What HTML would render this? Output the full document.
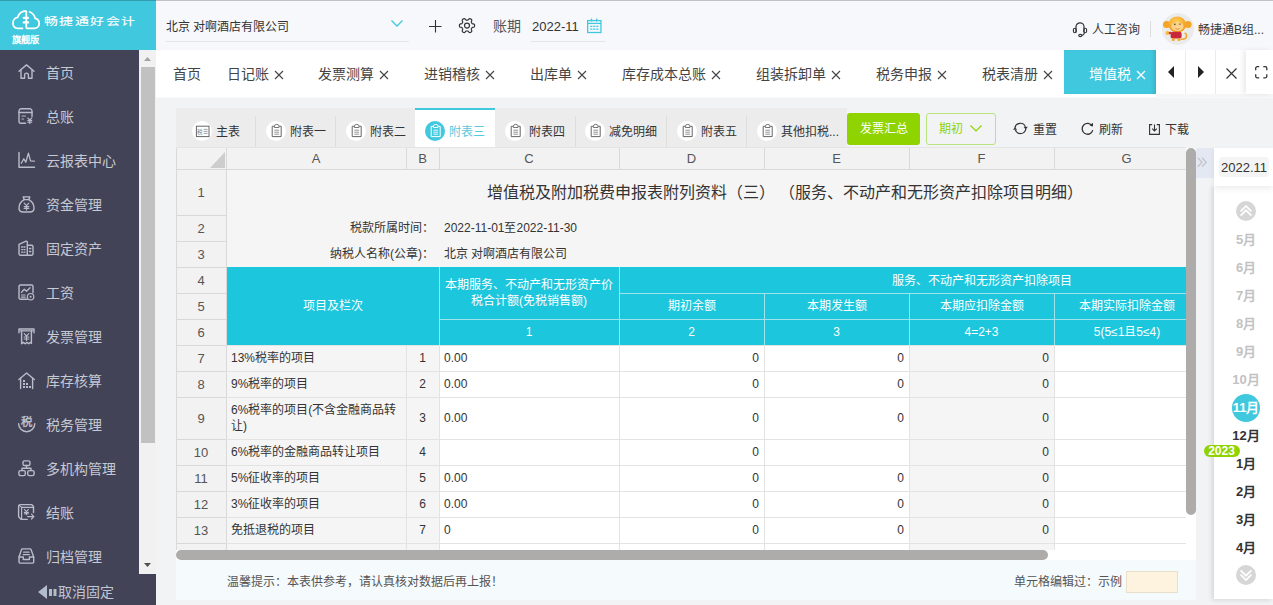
<!DOCTYPE html><html lang="zh-CN"><head><meta charset="utf-8"><style>
*{box-sizing:border-box;margin:0;padding:0}
html,body{width:1273px;height:605px;overflow:hidden;background:#f2f3f5;font-family:"Liberation Sans",sans-serif;font-size:12px;color:#333;position:relative}
.a{position:absolute}
.t{position:absolute;white-space:nowrap;line-height:14px}
svg{position:absolute;overflow:visible}
</style></head><body><div class="a" style="left:0px;top:0px;width:156px;height:50px;background:#40c8de;"></div>
<div class="a" style="left:0px;top:50px;width:156px;height:555px;background:#434357;"></div>
<div class="a" style="left:156px;top:0px;width:1117px;height:50px;background:#f7f8fc;"></div>
<div class="a" style="left:156px;top:50px;width:1117px;height:47px;background:#ffffff;"></div>
<div class="a" style="left:156px;top:97px;width:1117px;height:1px;background:#f7f8f9;"></div>
<div class="a" style="left:1156px;top:94px;width:117px;height:3px;background:#f6f6f7;"></div>
<div class="a" style="left:0px;top:0px;width:1273px;height:1px;background:rgba(0,0,0,.22);z-index:9"></div>
<svg style="left:12px;top:10px;" width="29" height="20" viewBox="0 0 29 20"><g fill="none" stroke="#fff" stroke-width="1.8" stroke-linecap="butt"><path d="M11.2 18.3 H5.6 C2.6 18.3 1 16 1 13.2 C1 10.2 3 7.6 5.6 7.3 C6.9 3.6 10.2 1 14.3 0.9"/><path d="M17 1.5 C20 2.6 22.3 5.2 23.2 8.3 C25.7 9 27.2 11 27.2 13.4 C27.2 16.3 25 18.3 22.2 18.3 H14.3"/><path d="M14.3 0.9 V18.3"/></g><rect x="10.6" y="6.7" width="6.5" height="2.3" rx="1.15" fill="#fff"/><rect x="10.6" y="11.2" width="6.5" height="2.4" rx="1.2" fill="#fff"/></svg>
<div class="t" style="left:44px;top:12.5px;font-size:14px;line-height:16px;color:#fff;letter-spacing:1.4px;font-weight:normal;transform:scaleY(.76);transform-origin:0 50%;-webkit-text-stroke:0.15px #fff">畅捷通好会计</div>
<div class="t" style="left:12px;top:34px;font-size:9.3px;line-height:12px;color:#fff;font-weight:bold">旗舰版</div>
<div class="a" style="left:139px;top:50px;width:17px;height:524px;background:#f1f1f1;"></div>
<div class="a" style="left:141px;top:67px;width:14px;height:376px;background:#c1c1c1;"></div>
<svg style="left:144px;top:57px;" width="7" height="4" viewBox="0 0 7 4"><path d="M0 4 L3.5 0 L7 4Z" fill="#a3a3a3"/></svg>
<svg style="left:144px;top:563px;" width="7" height="4" viewBox="0 0 7 4"><path d="M0 0 L3.5 4 L7 0Z" fill="#505050"/></svg>
<div class="t" style="left:46px;top:64.0px;font-size:14px;line-height:18px;color:#c6c9d4;">首页</div>
<svg style="left:18px;top:64px;" width="17" height="17" viewBox="0 0 17 17"><g fill="none" stroke="#b9bdc9" stroke-width="1.4" stroke-linejoin="round" stroke-linecap="round"><path d="M1 7.2 L8.5 0.9 L16 7.2"/><path d="M3 5.6 V14.3 H6.6 V11 A1.9 1.9 0 0 1 10.4 11 V14.3 H14 V5.6"/></g></svg>
<div class="t" style="left:46px;top:108.0px;font-size:14px;line-height:18px;color:#c6c9d4;">总账</div>
<svg style="left:18px;top:108px;" width="17" height="17" viewBox="0 0 17 17"><g fill="none" stroke="#b9bdc9" stroke-width="1.4" stroke-linejoin="round" stroke-linecap="round"><path d="M7.5 15.3 H2.5 A1.5 1.5 0 0 1 1 13.8 V3 A2.3 2.3 0 0 1 3.3 0.7 H11.7 A2.3 2.3 0 0 1 14 3 V8.5"/><path d="M1 4.5 H14"/><path d="M4 8 H7.5 M4 11 H5.5" stroke-width="1.2"/><path d="M9.8 10 L11.8 12 L13.8 10 M11.8 12 V15.8 M9.8 12.6 H13.8 M9.8 14.2 H13.8" stroke-width="1.1"/></g></svg>
<div class="t" style="left:46px;top:152.0px;font-size:14px;line-height:18px;color:#c6c9d4;">云报表中心</div>
<svg style="left:18px;top:152px;" width="17" height="17" viewBox="0 0 17 17"><g fill="none" stroke="#b9bdc9" stroke-width="1.4" stroke-linejoin="round" stroke-linecap="round"><path d="M1 0.5 V15.3 H16.5"/><path d="M3.3 11.2 L5.8 6.8 L7.8 10.2 L10.4 1.2 L12.5 8.8 L16.3 9.2" stroke-width="1.3"/></g></svg>
<div class="t" style="left:46px;top:196.0px;font-size:14px;line-height:18px;color:#c6c9d4;">资金管理</div>
<svg style="left:18px;top:196px;" width="17" height="17" viewBox="0 0 17 17"><g fill="none" stroke="#b9bdc9" stroke-width="1.4" stroke-linejoin="round" stroke-linecap="round"><path d="M5.2 0.9 H11.8 L10.8 3.6 H6.2 Z"/><path d="M6.2 3.6 C2.3 5.6 1 9.5 1 12.3 C1 14.8 2.8 16 5 16 H12 C14.2 16 16 14.8 16 12.3 C16 9.5 14.7 5.6 10.8 3.6"/><path d="M6.2 7.2 L8.5 9.6 L10.8 7.2 M8.5 9.6 V14 M6.2 10.6 H10.8 M6.2 12.4 H10.8" stroke-width="1.2"/></g></svg>
<div class="t" style="left:46px;top:240.0px;font-size:14px;line-height:18px;color:#c6c9d4;">固定资产</div>
<svg style="left:18px;top:240px;" width="17" height="17" viewBox="0 0 17 17"><g fill="none" stroke="#b9bdc9" stroke-width="1.4" stroke-linejoin="round" stroke-linecap="round"><path d="M9.3 15.3 H2.5 A1.5 1.5 0 0 1 1 13.8 V4.4 L8 1.2 A1 1 0 0 1 9.3 2.1 V15.3 H13.5 A1.5 1.5 0 0 0 15 13.8 V6.8 A1.5 1.5 0 0 0 13.5 5.3 H9.3"/><path d="M3.6 7 H4.6 M6 7 H7 M3.6 9.6 H4.6 M6 9.6 H7 M3.6 12.2 H4.6 M6 12.2 H7 M11.5 8.5 H12.8 M11.5 11.5 H12.8" stroke-width="1.3"/></g></svg>
<div class="t" style="left:46px;top:284.0px;font-size:14px;line-height:18px;color:#c6c9d4;">工资</div>
<svg style="left:18px;top:284px;" width="17" height="17" viewBox="0 0 17 17"><g fill="none" stroke="#b9bdc9" stroke-width="1.4" stroke-linejoin="round" stroke-linecap="round"><path d="M9.2 15.3 H2.5 A1.5 1.5 0 0 1 1 13.8 V2.5 A1.5 1.5 0 0 1 2.5 1 H13.5 A1.5 1.5 0 0 1 15 2.5 V8.8"/><path d="M3.5 8.3 L6.3 5.2 L8.5 7.3 L12 3.8" stroke-width="1.3"/><path d="M3.5 11 H7.2 M3.5 13.2 H7.2" stroke-width="1.2"/><circle cx="12.6" cy="12.7" r="3.2" stroke-width="1.2"/><circle cx="12.6" cy="12.7" r="1" fill="#b9bdc9" stroke="none"/></g></svg>
<div class="t" style="left:46px;top:328.0px;font-size:14px;line-height:18px;color:#c6c9d4;">发票管理</div>
<svg style="left:18px;top:328px;" width="17" height="17" viewBox="0 0 17 17"><g fill="none" stroke="#b9bdc9" stroke-width="1.4" stroke-linejoin="round" stroke-linecap="round"><path d="M1 4.8 V1 H16 V4.8"/><path d="M2.3 2.9 H14.7" stroke-width="1.1"/><path d="M3.6 2.9 V15.8 L5.4 14.4 L7.2 15.8 L9 14.4 L10.8 15.8 L12.6 14.4 L13.4 15.2 V2.9"/><path d="M6.2 5.6 L8.5 8 L10.8 5.6 M8.5 8 V12.5 M6.2 9 H10.8 M6.2 11 H10.8" stroke-width="1.2"/></g></svg>
<div class="t" style="left:46px;top:372.0px;font-size:14px;line-height:18px;color:#c6c9d4;">库存核算</div>
<svg style="left:18px;top:372px;" width="17" height="17" viewBox="0 0 17 17"><g fill="none" stroke="#b9bdc9" stroke-width="1.4" stroke-linejoin="round" stroke-linecap="round"><path d="M0.9 7.5 L8.6 1 L16.3 7.5"/><path d="M2.6 6.2 V16.5 M14.6 6.2 V16.5"/><g fill="#b9bdc9" stroke="none"><rect x="5" y="8" width="2" height="2"/><rect x="5" y="11" width="2" height="2"/><rect x="8" y="11" width="2" height="2"/><rect x="5" y="14" width="2" height="2"/><rect x="8" y="14" width="2" height="2"/><rect x="11" y="14" width="2" height="2"/></g></g></svg>
<div class="t" style="left:46px;top:416.0px;font-size:14px;line-height:18px;color:#c6c9d4;">税务管理</div>
<svg style="left:18px;top:416px;" width="17" height="17" viewBox="0 0 17 17"><g fill="none" stroke="#b9bdc9" stroke-width="1.4" stroke-linejoin="round" stroke-linecap="round"><path d="M0.6 7.6 A8.1 8.1 0 0 0 16.8 7.6"/><text x="8.4" y="10" font-size="11.5" font-weight="bold" text-anchor="middle" fill="#b9bdc9" stroke="none" font-family="Liberation Sans">税</text></g></svg>
<div class="t" style="left:46px;top:460.0px;font-size:14px;line-height:18px;color:#c6c9d4;">多机构管理</div>
<svg style="left:18px;top:460px;" width="17" height="17" viewBox="0 0 17 17"><g fill="none" stroke="#b9bdc9" stroke-width="1.4" stroke-linejoin="round" stroke-linecap="round"><rect x="5" y="0.9" width="7" height="4.6" rx="1.6"/><path d="M8.5 5.5 V8.2 M4 10.6 V8.2 H13 V10.6"/><rect x="0.9" y="10.6" width="6.4" height="5" rx="1.6"/><rect x="9.7" y="10.6" width="6.4" height="5" rx="1.6"/></g></svg>
<div class="t" style="left:46px;top:504.0px;font-size:14px;line-height:18px;color:#c6c9d4;">结账</div>
<svg style="left:18px;top:504px;" width="17" height="17" viewBox="0 0 17 17"><g fill="none" stroke="#b9bdc9" stroke-width="1.4" stroke-linejoin="round" stroke-linecap="round"><path d="M15.5 8.6 V2.6 L13.6 0.6 H2.4 A1.8 1.8 0 0 0 0.6 2.4 V12.8 L3.2 15.4 H9.2"/><path d="M3.6 15.2 V3.3 H15.3" stroke-width="1.2"/><path d="M1 1.1 L3.6 3.3" stroke-width="1.1"/><path d="M6.4 5.3 L8.4 7.5 L10.4 5.3 M8.4 7.5 V10.8 M6.4 8.4 H10.4 M6.4 9.8 H10.4" stroke-width="1.1"/><path d="M9.6 12.6 H15.9 M13.5 10.2 L15.9 12.6 L13.5 15" stroke-width="1.2"/></g></svg>
<div class="t" style="left:46px;top:548.0px;font-size:14px;line-height:18px;color:#c6c9d4;">归档管理</div>
<svg style="left:18px;top:548px;" width="17" height="17" viewBox="0 0 17 17"><g fill="none" stroke="#b9bdc9" stroke-width="1.4" stroke-linejoin="round" stroke-linecap="round"><path d="M1 9 L3.5 1.6 A1.1 1.1 0 0 1 4.5 0.9 H12 A1.1 1.1 0 0 1 13 1.6 L15.7 9 V14 A1.1 1.1 0 0 1 14.6 15.1 H2.1 A1.1 1.1 0 0 1 1 14 Z"/><path d="M1 9 H5.3 V11.5 H11.4 V9 H15.7"/><path d="M5.6 4.2 H11 M5.2 6.6 H11.4" stroke-width="1.3"/></g></svg>
<svg style="left:38px;top:585px;" width="20" height="14" viewBox="0 0 20 14"><path d="M0 7 L9 0 V14Z" fill="#b3bccb"/><rect x="11" y="4" width="3" height="7" fill="#b3bccb"/><rect x="15.5" y="4" width="3" height="7" fill="#b3bccb"/></svg>
<div class="t" style="left:58px;top:583.0px;font-size:14px;line-height:18px;color:#c0c6d4;">取消固定</div>
<div class="t" style="left:166px;top:19.0px;font-size:12px;line-height:16px;color:#333;">北京 对啊酒店有限公司</div>
<div class="a" style="left:166px;top:41px;width:243px;height:1px;background:#e3e5ea;"></div>
<svg style="left:391px;top:20px;" width="12" height="7" viewBox="0 0 12 7"><path d="M0.5 0.5 L6 6 L11.5 0.5" fill="none" stroke="#40c8de" stroke-width="1.3"/></svg>
<svg style="left:429px;top:20px;" width="12" height="12" viewBox="0 0 12 12"><path d="M6.5 0 V12.5 M0 6.5 H12.5" stroke="#333" stroke-width="1.1"/></svg>
<svg style="left:459px;top:18px;" width="16" height="16" viewBox="0 0 16 16"><circle cx="8" cy="7.6" r="2.5" fill="none" stroke="#333" stroke-width="1.2"/><path d="M15.60 7.60 L15.58 8.00 L15.52 8.39 L15.38 8.77 L15.01 9.09 L14.28 9.28 L13.55 9.40 L13.16 9.58 L12.97 9.81 L12.82 10.05 L12.68 10.30 L12.53 10.54 L12.40 10.79 L12.30 11.08 L12.33 11.50 L12.60 12.20 L12.80 12.93 L12.70 13.40 L12.45 13.72 L12.14 13.97 L11.80 14.18 L11.45 14.37 L11.08 14.51 L10.68 14.57 L10.21 14.42 L9.68 13.88 L9.21 13.31 L8.87 13.06 L8.57 13.01 L8.28 13.00 L8.00 13.00 L7.72 13.00 L7.43 13.01 L7.13 13.06 L6.79 13.31 L6.32 13.88 L5.79 14.42 L5.32 14.57 L4.92 14.51 L4.55 14.37 L4.20 14.18 L3.86 13.97 L3.55 13.72 L3.30 13.40 L3.20 12.93 L3.40 12.20 L3.67 11.50 L3.70 11.08 L3.60 10.79 L3.47 10.54 L3.32 10.30 L3.18 10.05 L3.03 9.81 L2.84 9.58 L2.45 9.40 L1.72 9.28 L0.99 9.09 L0.62 8.77 L0.48 8.39 L0.42 8.00 L0.40 7.60 L0.42 7.20 L0.48 6.81 L0.62 6.43 L0.99 6.11 L1.72 5.92 L2.45 5.80 L2.84 5.62 L3.03 5.39 L3.18 5.15 L3.32 4.90 L3.47 4.66 L3.60 4.41 L3.70 4.12 L3.67 3.70 L3.40 3.00 L3.20 2.27 L3.30 1.80 L3.55 1.48 L3.86 1.23 L4.20 1.02 L4.55 0.83 L4.92 0.69 L5.32 0.63 L5.79 0.78 L6.32 1.32 L6.79 1.89 L7.13 2.14 L7.43 2.19 L7.72 2.20 L8.00 2.20 L8.28 2.20 L8.57 2.19 L8.87 2.14 L9.21 1.89 L9.68 1.32 L10.21 0.78 L10.68 0.63 L11.08 0.69 L11.45 0.83 L11.80 1.02 L12.14 1.23 L12.45 1.48 L12.70 1.80 L12.80 2.27 L12.60 3.00 L12.33 3.70 L12.30 4.12 L12.40 4.41 L12.53 4.66 L12.68 4.90 L12.82 5.15 L12.97 5.39 L13.16 5.62 L13.55 5.80 L14.28 5.92 L15.01 6.11 L15.38 6.43 L15.52 6.81 L15.58 7.20Z" fill="none" stroke="#333" stroke-width="1.2" stroke-linejoin="round"/></svg>
<div class="t" style="left:493px;top:17.0px;font-size:14px;line-height:18px;color:#555;">账期</div>
<div class="t" style="left:532px;top:17.5px;font-size:13px;line-height:17px;color:#333;">2022-11</div>
<div class="a" style="left:531px;top:41px;width:75px;height:1px;background:#e3e5ea;"></div>
<svg style="left:587px;top:18px;" width="15" height="15" viewBox="0 0 15 15"><rect x="0.65" y="2.6" width="13.3" height="11.9" fill="none" stroke="#40c8de" stroke-width="1.3"/><path d="M0.7 5.4 H14" stroke="#40c8de" stroke-width="1.3"/><path d="M4.5 0.4 V3.6 M9.7 0.4 V3.6" stroke="#40c8de" stroke-width="1.3"/><path d="M3.2 8.4 H11.4 M3.2 11.1 H11.4" stroke="#40c8de" stroke-width="1.2" stroke-dasharray="2.2 0.8"/></svg>
<svg style="left:1072px;top:21px;" width="16" height="17" viewBox="0 0 16 17"><path d="M4 11.5 V5.8 A4 4 0 0 1 12 5.8 V11.5" fill="none" stroke="#333" stroke-width="1.2"/><rect x="1.4" y="7.3" width="2.8" height="4.4" rx="1.4" fill="none" stroke="#333" stroke-width="1.1"/><rect x="11.8" y="7.3" width="2.8" height="4.4" rx="1.4" fill="none" stroke="#333" stroke-width="1.1"/><path d="M12.4 11.8 Q12 14.2 9.8 14.4" fill="none" stroke="#333" stroke-width="1.1"/><ellipse cx="8.3" cy="14.5" rx="1.6" ry="1.1" fill="none" stroke="#333" stroke-width="1.1"/></svg>
<div class="t" style="left:1092px;top:22.0px;font-size:12px;line-height:16px;color:#3a3a3a;">人工咨询</div>
<div class="a" style="left:1150px;top:21px;width:1px;height:16px;background:#dcdcdc;"></div>
<div class="a" style="left:1162px;top:13px;width:32px;height:32px;border-radius:50%;background:#ebebeb"></div>
<svg style="left:1158px;top:8px;" width="40" height="40" viewBox="0 0 40 40"><defs><radialGradient id="mh" cx="45%" cy="35%" r="65%"><stop offset="0" stop-color="#ffd25a"/><stop offset="1" stop-color="#f29a1c"/></radialGradient></defs><path d="M23 31 Q28.5 32 28.5 27.5 Q28.5 25 26.5 25.5" fill="none" stroke="#f3a52a" stroke-width="1.6"/><circle cx="8.6" cy="16.5" r="3.6" fill="#f4a428"/><circle cx="30" cy="16.5" r="3.6" fill="#f4a428"/><ellipse cx="19.3" cy="16.5" rx="8.8" ry="8" fill="url(#mh)"/><ellipse cx="19.5" cy="18.5" rx="6" ry="4.6" fill="#fbd48a"/><circle cx="16.8" cy="16.3" r="0.9" fill="#6a4a3a"/><path d="M20.8 16.3 Q22 15.6 23 16.3" stroke="#6a4a3a" stroke-width="0.8" fill="none"/><path d="M17.5 20.5 Q19.5 22 21.5 20.5" stroke="#c86a2a" stroke-width="0.8" fill="#fff"/><circle cx="9.5" cy="25" r="2" fill="#f7b83a"/><rect x="12.6" y="23.8" width="11" height="6.8" rx="2" fill="#c8283a"/><path d="M11 25.5 L13 24.5" stroke="#c8283a" stroke-width="2"/><rect x="13.8" y="30" width="3" height="3" rx="1.2" fill="#f3a52a"/><rect x="19.6" y="30" width="3" height="3" rx="1.2" fill="#f3a52a"/></svg>
<div class="t" style="left:1198px;top:22.0px;font-size:12px;line-height:16px;color:#3a3a3a;">畅捷通B组...</div>
<div class="t" style="left:173px;top:65.0px;font-size:14px;line-height:18px;color:#444;">首页</div>
<div class="t" style="left:227px;top:65.0px;font-size:14px;line-height:18px;color:#444;">日记账</div>
<svg style="left:274px;top:70px;" width="10" height="10" viewBox="0 0 10 10"><path d="M1 1 L9 9 M9 1 L1 9" stroke="#444" stroke-width="1.1"/></svg>
<div class="t" style="left:318px;top:65.0px;font-size:14px;line-height:18px;color:#444;">发票测算</div>
<svg style="left:379px;top:70px;" width="10" height="10" viewBox="0 0 10 10"><path d="M1 1 L9 9 M9 1 L1 9" stroke="#444" stroke-width="1.1"/></svg>
<div class="t" style="left:424px;top:65.0px;font-size:14px;line-height:18px;color:#444;">进销稽核</div>
<svg style="left:485px;top:70px;" width="10" height="10" viewBox="0 0 10 10"><path d="M1 1 L9 9 M9 1 L1 9" stroke="#444" stroke-width="1.1"/></svg>
<div class="t" style="left:530px;top:65.0px;font-size:14px;line-height:18px;color:#444;">出库单</div>
<svg style="left:577px;top:70px;" width="10" height="10" viewBox="0 0 10 10"><path d="M1 1 L9 9 M9 1 L1 9" stroke="#444" stroke-width="1.1"/></svg>
<div class="t" style="left:622px;top:65.0px;font-size:14px;line-height:18px;color:#444;">库存成本总账</div>
<svg style="left:711px;top:70px;" width="10" height="10" viewBox="0 0 10 10"><path d="M1 1 L9 9 M9 1 L1 9" stroke="#444" stroke-width="1.1"/></svg>
<div class="t" style="left:756px;top:65.0px;font-size:14px;line-height:18px;color:#444;">组装拆卸单</div>
<svg style="left:831px;top:70px;" width="10" height="10" viewBox="0 0 10 10"><path d="M1 1 L9 9 M9 1 L1 9" stroke="#444" stroke-width="1.1"/></svg>
<div class="t" style="left:876px;top:65.0px;font-size:14px;line-height:18px;color:#444;">税务申报</div>
<svg style="left:937px;top:70px;" width="10" height="10" viewBox="0 0 10 10"><path d="M1 1 L9 9 M9 1 L1 9" stroke="#444" stroke-width="1.1"/></svg>
<div class="t" style="left:982px;top:65.0px;font-size:14px;line-height:18px;color:#444;">税表清册</div>
<svg style="left:1043px;top:70px;" width="10" height="10" viewBox="0 0 10 10"><path d="M1 1 L9 9 M9 1 L1 9" stroke="#444" stroke-width="1.1"/></svg>
<div class="a" style="left:1064px;top:50px;width:92px;height:44px;background:#40c8de;box-shadow:inset -4px 0 4px -2px rgba(0,0,0,.12)"></div>
<div class="t" style="left:1089px;top:65.0px;font-size:14px;line-height:18px;color:#fff;">增值税</div>
<svg style="left:1136px;top:70px;" width="10" height="10" viewBox="0 0 10 10"><path d="M1 1 L9 9 M9 1 L1 9" stroke="#fff" stroke-width="1.3"/></svg>
<div class="a" style="left:1185px;top:50px;width:1px;height:44px;background:#ececec;"></div>
<div class="a" style="left:1215px;top:50px;width:1px;height:44px;background:#ececec;"></div>
<svg style="left:1168px;top:66px;" width="6" height="12" viewBox="0 0 6 12"><path d="M6 0 V12 L0 6Z" fill="#222"/></svg>
<svg style="left:1198px;top:66px;" width="6" height="12" viewBox="0 0 6 12"><path d="M0 0 V12 L6 6Z" fill="#222"/></svg>
<svg style="left:1226px;top:68px;" width="11" height="11" viewBox="0 0 11 11"><path d="M0.5 0.5 L10.5 10.5 M10.5 0.5 L0.5 10.5" stroke="#333" stroke-width="1.2"/></svg>
<div class="a" style="left:1246px;top:50px;width:27px;height:44px;background:#fff;box-shadow:-3px 0 5px rgba(0,0,0,.08)"></div>
<svg style="left:1255px;top:66px;" width="13" height="13" viewBox="0 0 13 13"><path d="M0.7 4.2 V2.2 A1.5 1.5 0 0 1 2.2 0.7 H4.2 M8.3 0.7 H10.3 A1.5 1.5 0 0 1 11.8 2.2 V4.2 M11.8 8.3 V10.3 A1.5 1.5 0 0 1 10.3 11.8 H8.3 M4.2 11.8 H2.2 A1.5 1.5 0 0 1 0.7 10.3 V8.3" fill="none" stroke="#333" stroke-width="1.3"/></svg>
<div class="a" style="left:176px;top:108px;width:671px;height:39px;background:#ececec;"></div>
<div class="a" style="left:192px;top:121px;width:20px;height:20px;border-radius:50%;background:#fff"></div>
<svg style="left:192px;top:121px;" width="20" height="20" viewBox="0 0 20 20"><rect x="4.4" y="5.2" width="12.6" height="10.4" fill="none" stroke="#666" stroke-width="1"/><text x="5.4" y="12.7" font-size="5.6" fill="#888" font-family="Liberation Sans">税</text><path d="M11.6 8.4 H15.6 M11.6 10.4 H15.6 M11.6 12.4 H15.6" stroke="#999" stroke-width="0.9"/></svg>
<div class="t" style="left:216px;top:124.0px;font-size:12px;line-height:16px;color:#333;">主表</div>
<div class="a" style="left:266px;top:121px;width:20px;height:20px;border-radius:50%;background:#fff"></div>
<svg style="left:266px;top:121px;" width="20" height="20" viewBox="0 0 20 20"><path d="M8.2 5.3 H6.2 V15.6 H15.2 V5.3 H13.2" fill="none" stroke="#666" stroke-width="1"/><path d="M8.4 6.5 V5.2 A2.3 1.8 0 0 1 13 5.2 V6.5 Z" fill="none" stroke="#666" stroke-width="0.9"/><path d="M8.3 9.2 H13.1 M8.3 11.2 H13.1 M8.3 13.2 H13.1" stroke="#888" stroke-width="0.9"/></svg>
<div class="t" style="left:290px;top:124.0px;font-size:12px;line-height:16px;color:#333;">附表一</div>
<div class="a" style="left:346px;top:121px;width:20px;height:20px;border-radius:50%;background:#fff"></div>
<svg style="left:346px;top:121px;" width="20" height="20" viewBox="0 0 20 20"><path d="M8.2 5.3 H6.2 V15.6 H15.2 V5.3 H13.2" fill="none" stroke="#666" stroke-width="1"/><path d="M8.4 6.5 V5.2 A2.3 1.8 0 0 1 13 5.2 V6.5 Z" fill="none" stroke="#666" stroke-width="0.9"/><path d="M8.3 9.2 H13.1 M8.3 11.2 H13.1 M8.3 13.2 H13.1" stroke="#888" stroke-width="0.9"/></svg>
<div class="t" style="left:370px;top:124.0px;font-size:12px;line-height:16px;color:#333;">附表二</div>
<div class="a" style="left:415px;top:108px;width:80px;height:39px;background:#fff;"></div>
<div class="a" style="left:415px;top:108px;width:80px;height:2px;background:#40c8de;"></div>
<div class="a" style="left:425px;top:121px;width:20px;height:20px;border-radius:50%;background:#40c8de"></div>
<svg style="left:425px;top:121px;" width="20" height="20" viewBox="0 0 20 20"><path d="M8.2 5.3 H6.2 V15.6 H15.2 V5.3 H13.2" fill="none" stroke="#fff" stroke-width="1"/><path d="M8.4 6.5 V5.2 A2.3 1.8 0 0 1 13 5.2 V6.5 Z" fill="none" stroke="#fff" stroke-width="0.9"/><path d="M8.3 9.2 H13.1 M8.3 11.2 H13.1 M8.3 13.2 H13.1" stroke="#fff" stroke-width="0.9"/></svg>
<div class="t" style="left:449px;top:124.0px;font-size:12px;line-height:16px;color:#5cc8dc;">附表三</div>
<div class="a" style="left:505px;top:121px;width:20px;height:20px;border-radius:50%;background:#fff"></div>
<svg style="left:505px;top:121px;" width="20" height="20" viewBox="0 0 20 20"><path d="M8.2 5.3 H6.2 V15.6 H15.2 V5.3 H13.2" fill="none" stroke="#666" stroke-width="1"/><path d="M8.4 6.5 V5.2 A2.3 1.8 0 0 1 13 5.2 V6.5 Z" fill="none" stroke="#666" stroke-width="0.9"/><path d="M8.3 9.2 H13.1 M8.3 11.2 H13.1 M8.3 13.2 H13.1" stroke="#888" stroke-width="0.9"/></svg>
<div class="t" style="left:529px;top:124.0px;font-size:12px;line-height:16px;color:#333;">附表四</div>
<div class="a" style="left:585px;top:121px;width:20px;height:20px;border-radius:50%;background:#fff"></div>
<svg style="left:585px;top:121px;" width="20" height="20" viewBox="0 0 20 20"><path d="M8.2 5.3 H6.2 V15.6 H15.2 V5.3 H13.2" fill="none" stroke="#666" stroke-width="1"/><path d="M8.4 6.5 V5.2 A2.3 1.8 0 0 1 13 5.2 V6.5 Z" fill="none" stroke="#666" stroke-width="0.9"/><path d="M8.3 9.2 H13.1 M8.3 11.2 H13.1 M8.3 13.2 H13.1" stroke="#888" stroke-width="0.9"/></svg>
<div class="t" style="left:609px;top:124.0px;font-size:12px;line-height:16px;color:#333;">减免明细</div>
<div class="a" style="left:677px;top:121px;width:20px;height:20px;border-radius:50%;background:#fff"></div>
<svg style="left:677px;top:121px;" width="20" height="20" viewBox="0 0 20 20"><path d="M8.2 5.3 H6.2 V15.6 H15.2 V5.3 H13.2" fill="none" stroke="#666" stroke-width="1"/><path d="M8.4 6.5 V5.2 A2.3 1.8 0 0 1 13 5.2 V6.5 Z" fill="none" stroke="#666" stroke-width="0.9"/><path d="M8.3 9.2 H13.1 M8.3 11.2 H13.1 M8.3 13.2 H13.1" stroke="#888" stroke-width="0.9"/></svg>
<div class="t" style="left:701px;top:124.0px;font-size:12px;line-height:16px;color:#333;">附表五</div>
<div class="a" style="left:757px;top:121px;width:20px;height:20px;border-radius:50%;background:#fff"></div>
<svg style="left:757px;top:121px;" width="20" height="20" viewBox="0 0 20 20"><path d="M8.2 5.3 H6.2 V15.6 H15.2 V5.3 H13.2" fill="none" stroke="#666" stroke-width="1"/><path d="M8.4 6.5 V5.2 A2.3 1.8 0 0 1 13 5.2 V6.5 Z" fill="none" stroke="#666" stroke-width="0.9"/><path d="M8.3 9.2 H13.1 M8.3 11.2 H13.1 M8.3 13.2 H13.1" stroke="#888" stroke-width="0.9"/></svg>
<div class="t" style="left:781px;top:124.0px;font-size:12px;line-height:16px;color:#333;">其他扣税...</div>
<div class="a" style="left:255px;top:116px;width:1px;height:31px;background:#dedede;"></div>
<div class="a" style="left:335px;top:116px;width:1px;height:31px;background:#dedede;"></div>
<div class="a" style="left:575px;top:116px;width:1px;height:31px;background:#dedede;"></div>
<div class="a" style="left:666px;top:116px;width:1px;height:31px;background:#dedede;"></div>
<div class="a" style="left:746px;top:116px;width:1px;height:31px;background:#dedede;"></div>
<div class="a" style="left:847px;top:113px;width:73px;height:32px;background:#8fd400;border-radius:3px"></div>
<div class="t" style="left:683.5px;top:121.0px;width:400px;text-align:center;font-size:12px;line-height:16px;color:#fff;">发票汇总</div>
<div class="a" style="left:926px;top:113px;width:70px;height:32px;border:1px solid #b9e47d;border-radius:3px"></div>
<div class="t" style="left:939px;top:121.0px;font-size:12px;line-height:16px;color:#8fd400;">期初</div>
<svg style="left:970px;top:125px;" width="12" height="7" viewBox="0 0 12 7"><path d="M0.5 0.5 L6 6 L11.5 0.5" fill="none" stroke="#8fd400" stroke-width="1.2"/></svg>
<svg style="left:1013px;top:121px;" width="15" height="14" viewBox="0 0 15 14"><path d="M2 6.8 A5.4 5.4 0 0 1 12.4 5.8" fill="none" stroke="#333" stroke-width="1.2"/><path d="M12.8 8 A5.4 5.4 0 0 1 2.4 9" fill="none" stroke="#333" stroke-width="1.2"/><path d="M10.6 6 L12.8 8.6 L14.8 5.8Z" fill="#333"/><path d="M0 8.8 L2 6.2 L4.2 8.8Z" fill="#333"/></svg>
<div class="t" style="left:1033px;top:122.0px;font-size:12px;line-height:16px;color:#333;">重置</div>
<svg style="left:1081px;top:122px;" width="13" height="13" viewBox="0 0 13 13"><path d="M11.2 4 A5.4 5.4 0 1 0 11.8 8.2" fill="none" stroke="#333" stroke-width="1.3"/><path d="M8.6 3.6 L12 4.4 L12 0.8Z" fill="#333"/></svg>
<div class="t" style="left:1099px;top:122.0px;font-size:12px;line-height:16px;color:#333;">刷新</div>
<svg style="left:1149px;top:124px;" width="11" height="11" viewBox="0 0 11 11"><path d="M3.2 0.6 H0.6 V10.4 H10.4 V0.6 H7.8" fill="none" stroke="#333" stroke-width="1.1"/><path d="M5.5 0.5 V6.8 M3.2 4.6 L5.5 6.9 L7.8 4.6" fill="none" stroke="#333" stroke-width="1.1"/></svg>
<div class="t" style="left:1165px;top:122.0px;font-size:12px;line-height:16px;color:#333;">下载</div>
<div class="a" style="left:176px;top:148px;width:1020px;height:412px;background:#ffffff;"></div>
<div class="a" style="left:176px;top:148px;width:1010px;height:21px;background:#f2f2f2;"></div>
<div class="a" style="left:176px;top:169px;width:50px;height:381px;background:#f2f2f2;"></div>
<div class="a" style="left:226px;top:169px;width:960px;height:98px;background:#f5f5f5;"></div>
<div class="a" style="left:226px;top:345px;width:213px;height:205px;background:#f5f5f5;"></div>
<div class="a" style="left:909px;top:345px;width:145px;height:205px;background:#f5f5f5;"></div>
<div class="a" style="left:226px;top:267px;width:960px;height:78px;background:#1cc6dc;"></div>
<div class="a" style="left:439px;top:267px;width:1px;height:78px;background:#9fe3ec;"></div>
<div class="a" style="left:619px;top:267px;width:1px;height:78px;background:#9fe3ec;"></div>
<div class="a" style="left:619px;top:293px;width:567px;height:1px;background:#9fe3ec;"></div>
<div class="a" style="left:439px;top:319px;width:747px;height:1px;background:#9fe3ec;"></div>
<div class="a" style="left:764px;top:293px;width:1px;height:52px;background:#9fe3ec;"></div>
<div class="a" style="left:909px;top:293px;width:1px;height:52px;background:#9fe3ec;"></div>
<div class="a" style="left:1054px;top:293px;width:1px;height:52px;background:#9fe3ec;"></div>
<div class="t" style="left:116.0px;top:150.0px;width:400px;text-align:center;font-size:13px;line-height:17px;color:#555;">A</div>
<div class="t" style="left:222.5px;top:150.0px;width:400px;text-align:center;font-size:13px;line-height:17px;color:#555;">B</div>
<div class="t" style="left:329.0px;top:150.0px;width:400px;text-align:center;font-size:13px;line-height:17px;color:#555;">C</div>
<div class="t" style="left:491.5px;top:150.0px;width:400px;text-align:center;font-size:13px;line-height:17px;color:#555;">D</div>
<div class="t" style="left:636.5px;top:150.0px;width:400px;text-align:center;font-size:13px;line-height:17px;color:#555;">E</div>
<div class="t" style="left:781.5px;top:150.0px;width:400px;text-align:center;font-size:13px;line-height:17px;color:#555;">F</div>
<div class="t" style="left:926.5px;top:150.0px;width:400px;text-align:center;font-size:13px;line-height:17px;color:#555;">G</div>
<div class="a" style="left:226px;top:148px;width:1px;height:21px;background:#d9d9d9;"></div>
<div class="a" style="left:406px;top:148px;width:1px;height:21px;background:#d9d9d9;"></div>
<div class="a" style="left:439px;top:148px;width:1px;height:21px;background:#d9d9d9;"></div>
<div class="a" style="left:619px;top:148px;width:1px;height:21px;background:#d9d9d9;"></div>
<div class="a" style="left:764px;top:148px;width:1px;height:21px;background:#d9d9d9;"></div>
<div class="a" style="left:909px;top:148px;width:1px;height:21px;background:#d9d9d9;"></div>
<div class="a" style="left:1054px;top:148px;width:1px;height:21px;background:#d9d9d9;"></div>
<div class="a" style="left:176px;top:169px;width:1010px;height:1px;background:#d9d9d9;"></div>
<div class="a" style="left:176px;top:148px;width:1px;height:402px;background:#d9d9d9;"></div>
<div class="a" style="left:226px;top:148px;width:1px;height:402px;background:#d9d9d9;"></div>
<svg style="left:210px;top:152px;" width="15" height="16" viewBox="0 0 15 16"><path d="M15 0 V16 H0Z" fill="#cdcdcd"/></svg>
<div class="a" style="left:176px;top:147px;width:1010px;height:1px;background:#e4e4e4;"></div>
<div class="t" style="left:1.0px;top:183.5px;width:400px;text-align:center;font-size:13px;line-height:17px;color:#555;">1</div>
<div class="a" style="left:176px;top:215px;width:50px;height:1px;background:#d9d9d9;"></div>
<div class="t" style="left:1.0px;top:219.5px;width:400px;text-align:center;font-size:13px;line-height:17px;color:#555;">2</div>
<div class="a" style="left:176px;top:241px;width:50px;height:1px;background:#d9d9d9;"></div>
<div class="t" style="left:1.0px;top:245.5px;width:400px;text-align:center;font-size:13px;line-height:17px;color:#555;">3</div>
<div class="a" style="left:176px;top:267px;width:50px;height:1px;background:#d9d9d9;"></div>
<div class="t" style="left:1.0px;top:271.5px;width:400px;text-align:center;font-size:13px;line-height:17px;color:#555;">4</div>
<div class="a" style="left:176px;top:293px;width:50px;height:1px;background:#d9d9d9;"></div>
<div class="t" style="left:1.0px;top:297.5px;width:400px;text-align:center;font-size:13px;line-height:17px;color:#555;">5</div>
<div class="a" style="left:176px;top:319px;width:50px;height:1px;background:#d9d9d9;"></div>
<div class="t" style="left:1.0px;top:323.5px;width:400px;text-align:center;font-size:13px;line-height:17px;color:#555;">6</div>
<div class="a" style="left:176px;top:345px;width:50px;height:1px;background:#d9d9d9;"></div>
<div class="t" style="left:1.0px;top:349.5px;width:400px;text-align:center;font-size:13px;line-height:17px;color:#555;">7</div>
<div class="a" style="left:176px;top:371px;width:50px;height:1px;background:#d9d9d9;"></div>
<div class="t" style="left:1.0px;top:375.5px;width:400px;text-align:center;font-size:13px;line-height:17px;color:#555;">8</div>
<div class="a" style="left:176px;top:397px;width:50px;height:1px;background:#d9d9d9;"></div>
<div class="t" style="left:1.0px;top:409.5px;width:400px;text-align:center;font-size:13px;line-height:17px;color:#555;">9</div>
<div class="a" style="left:176px;top:439px;width:50px;height:1px;background:#d9d9d9;"></div>
<div class="t" style="left:1.0px;top:443.5px;width:400px;text-align:center;font-size:13px;line-height:17px;color:#555;">10</div>
<div class="a" style="left:176px;top:465px;width:50px;height:1px;background:#d9d9d9;"></div>
<div class="t" style="left:1.0px;top:469.5px;width:400px;text-align:center;font-size:13px;line-height:17px;color:#555;">11</div>
<div class="a" style="left:176px;top:491px;width:50px;height:1px;background:#d9d9d9;"></div>
<div class="t" style="left:1.0px;top:495.5px;width:400px;text-align:center;font-size:13px;line-height:17px;color:#555;">12</div>
<div class="a" style="left:176px;top:517px;width:50px;height:1px;background:#d9d9d9;"></div>
<div class="t" style="left:1.0px;top:521.5px;width:400px;text-align:center;font-size:13px;line-height:17px;color:#555;">13</div>
<div class="a" style="left:176px;top:543px;width:50px;height:1px;background:#d9d9d9;"></div>
<div class="t" style="left:1.0px;top:547.5px;width:400px;text-align:center;font-size:13px;line-height:17px;color:#555;">14</div>
<div class="a" style="left:176px;top:569px;width:50px;height:1px;background:#d9d9d9;"></div>
<div class="a" style="left:226px;top:345px;width:960px;height:1px;background:#e3e3e3;"></div>
<div class="a" style="left:226px;top:371px;width:960px;height:1px;background:#e3e3e3;"></div>
<div class="a" style="left:226px;top:397px;width:960px;height:1px;background:#e3e3e3;"></div>
<div class="a" style="left:226px;top:439px;width:960px;height:1px;background:#e3e3e3;"></div>
<div class="a" style="left:226px;top:465px;width:960px;height:1px;background:#e3e3e3;"></div>
<div class="a" style="left:226px;top:491px;width:960px;height:1px;background:#e3e3e3;"></div>
<div class="a" style="left:226px;top:517px;width:960px;height:1px;background:#e3e3e3;"></div>
<div class="a" style="left:226px;top:543px;width:960px;height:1px;background:#e3e3e3;"></div>
<div class="a" style="left:406px;top:345px;width:1px;height:205px;background:#e3e3e3;"></div>
<div class="a" style="left:439px;top:345px;width:1px;height:205px;background:#e3e3e3;"></div>
<div class="a" style="left:619px;top:345px;width:1px;height:205px;background:#e3e3e3;"></div>
<div class="a" style="left:764px;top:345px;width:1px;height:205px;background:#e3e3e3;"></div>
<div class="a" style="left:909px;top:345px;width:1px;height:205px;background:#e3e3e3;"></div>
<div class="a" style="left:1054px;top:345px;width:1px;height:205px;background:#e3e3e3;"></div>
<div class="t" style="left:385.0px;top:183.0px;width:800px;text-align:center;font-size:16px;line-height:20px;color:#333;">增值税及附加税费申报表附列资料（三） （服务、不动产和无形资产扣除项目明细）</div>
<div class="t" style="left:34px;top:220.0px;width:400px;text-align:right;font-size:12px;line-height:16px;color:#333;">税款所属时间：</div>
<div class="t" style="left:34px;top:246.0px;width:400px;text-align:right;font-size:12px;line-height:16px;color:#333;">纳税人名称(公章)：</div>
<div class="t" style="left:444px;top:220.0px;font-size:12px;line-height:16px;color:#333;">2022-11-01至2022-11-30</div>
<div class="t" style="left:444px;top:246.0px;font-size:12px;line-height:16px;color:#333;">北京 对啊酒店有限公司</div>
<div class="t" style="left:132.5px;top:298.0px;width:400px;text-align:center;font-size:12px;line-height:16px;color:#fff;">项目及栏次</div>
<div class="t" style="left:329.0px;top:277.0px;width:400px;text-align:center;font-size:12px;line-height:16px;color:#fff;">本期服务、不动产和无形资产价</div>
<div class="t" style="left:329.0px;top:293.0px;width:400px;text-align:center;font-size:12px;line-height:16px;color:#fff;">税合计额(免税销售额)</div>
<div class="t" style="left:329.0px;top:324.0px;width:400px;text-align:center;font-size:12px;line-height:16px;color:#fff;">1</div>
<div class="t" style="left:781.5px;top:272.5px;width:400px;text-align:center;font-size:12px;line-height:16px;color:#fff;">服务、不动产和无形资产扣除项目</div>
<div class="t" style="left:491.5px;top:298.0px;width:400px;text-align:center;font-size:12px;line-height:16px;color:#fff;">期初余额</div>
<div class="t" style="left:636.5px;top:298.0px;width:400px;text-align:center;font-size:12px;line-height:16px;color:#fff;">本期发生额</div>
<div class="t" style="left:781.5px;top:298.0px;width:400px;text-align:center;font-size:12px;line-height:16px;color:#fff;">本期应扣除金额</div>
<div class="t" style="left:927.0px;top:298.0px;width:400px;text-align:center;font-size:12px;line-height:16px;color:#fff;">本期实际扣除金额</div>
<div class="t" style="left:491.5px;top:324.0px;width:400px;text-align:center;font-size:12px;line-height:16px;color:#fff;">2</div>
<div class="t" style="left:636.5px;top:324.0px;width:400px;text-align:center;font-size:12px;line-height:16px;color:#fff;">3</div>
<div class="t" style="left:781.5px;top:324.0px;width:400px;text-align:center;font-size:12px;line-height:16px;color:#fff;">4=2+3</div>
<div class="t" style="left:927.0px;top:324.0px;width:400px;text-align:center;font-size:12px;line-height:16px;color:#fff;">5(5≤1且5≤4)</div>
<div class="t" style="left:231px;top:350.0px;font-size:12px;line-height:16px;color:#333;">13%税率的项目</div>
<div class="t" style="left:222.5px;top:350.0px;width:400px;text-align:center;font-size:12px;line-height:16px;color:#333;">1</div>
<div class="t" style="left:444px;top:350.0px;font-size:12px;line-height:16px;color:#333;">0.00</div>
<div class="t" style="left:359px;top:350.0px;width:400px;text-align:right;font-size:12px;line-height:16px;color:#333;">0</div>
<div class="t" style="left:504px;top:350.0px;width:400px;text-align:right;font-size:12px;line-height:16px;color:#333;">0</div>
<div class="t" style="left:649px;top:350.0px;width:400px;text-align:right;font-size:12px;line-height:16px;color:#333;">0</div>
<div class="t" style="left:231px;top:376.0px;font-size:12px;line-height:16px;color:#333;">9%税率的项目</div>
<div class="t" style="left:222.5px;top:376.0px;width:400px;text-align:center;font-size:12px;line-height:16px;color:#333;">2</div>
<div class="t" style="left:444px;top:376.0px;font-size:12px;line-height:16px;color:#333;">0.00</div>
<div class="t" style="left:359px;top:376.0px;width:400px;text-align:right;font-size:12px;line-height:16px;color:#333;">0</div>
<div class="t" style="left:504px;top:376.0px;width:400px;text-align:right;font-size:12px;line-height:16px;color:#333;">0</div>
<div class="t" style="left:649px;top:376.0px;width:400px;text-align:right;font-size:12px;line-height:16px;color:#333;">0</div>
<div class="t" style="left:231px;top:402.0px;font-size:12px;line-height:16px;color:#333;white-space:normal">6%税率的项目(不含金融商品转<br>让)</div>
<div class="t" style="left:222.5px;top:410.0px;width:400px;text-align:center;font-size:12px;line-height:16px;color:#333;">3</div>
<div class="t" style="left:444px;top:410.0px;font-size:12px;line-height:16px;color:#333;">0.00</div>
<div class="t" style="left:359px;top:410.0px;width:400px;text-align:right;font-size:12px;line-height:16px;color:#333;">0</div>
<div class="t" style="left:504px;top:410.0px;width:400px;text-align:right;font-size:12px;line-height:16px;color:#333;">0</div>
<div class="t" style="left:649px;top:410.0px;width:400px;text-align:right;font-size:12px;line-height:16px;color:#333;">0</div>
<div class="t" style="left:231px;top:444.0px;font-size:12px;line-height:16px;color:#333;">6%税率的金融商品转让项目</div>
<div class="t" style="left:222.5px;top:444.0px;width:400px;text-align:center;font-size:12px;line-height:16px;color:#333;">4</div>
<div class="t" style="left:359px;top:444.0px;width:400px;text-align:right;font-size:12px;line-height:16px;color:#333;">0</div>
<div class="t" style="left:649px;top:444.0px;width:400px;text-align:right;font-size:12px;line-height:16px;color:#333;">0</div>
<div class="t" style="left:231px;top:470.0px;font-size:12px;line-height:16px;color:#333;">5%征收率的项目</div>
<div class="t" style="left:222.5px;top:470.0px;width:400px;text-align:center;font-size:12px;line-height:16px;color:#333;">5</div>
<div class="t" style="left:444px;top:470.0px;font-size:12px;line-height:16px;color:#333;">0.00</div>
<div class="t" style="left:359px;top:470.0px;width:400px;text-align:right;font-size:12px;line-height:16px;color:#333;">0</div>
<div class="t" style="left:504px;top:470.0px;width:400px;text-align:right;font-size:12px;line-height:16px;color:#333;">0</div>
<div class="t" style="left:649px;top:470.0px;width:400px;text-align:right;font-size:12px;line-height:16px;color:#333;">0</div>
<div class="t" style="left:231px;top:496.0px;font-size:12px;line-height:16px;color:#333;">3%征收率的项目</div>
<div class="t" style="left:222.5px;top:496.0px;width:400px;text-align:center;font-size:12px;line-height:16px;color:#333;">6</div>
<div class="t" style="left:444px;top:496.0px;font-size:12px;line-height:16px;color:#333;">0.00</div>
<div class="t" style="left:359px;top:496.0px;width:400px;text-align:right;font-size:12px;line-height:16px;color:#333;">0</div>
<div class="t" style="left:504px;top:496.0px;width:400px;text-align:right;font-size:12px;line-height:16px;color:#333;">0</div>
<div class="t" style="left:649px;top:496.0px;width:400px;text-align:right;font-size:12px;line-height:16px;color:#333;">0</div>
<div class="t" style="left:231px;top:522.0px;font-size:12px;line-height:16px;color:#333;">免抵退税的项目</div>
<div class="t" style="left:222.5px;top:522.0px;width:400px;text-align:center;font-size:12px;line-height:16px;color:#333;">7</div>
<div class="t" style="left:444px;top:522.0px;font-size:12px;line-height:16px;color:#333;">0</div>
<div class="t" style="left:359px;top:522.0px;width:400px;text-align:right;font-size:12px;line-height:16px;color:#333;">0</div>
<div class="t" style="left:504px;top:522.0px;width:400px;text-align:right;font-size:12px;line-height:16px;color:#333;">0</div>
<div class="t" style="left:649px;top:522.0px;width:400px;text-align:right;font-size:12px;line-height:16px;color:#333;">0</div>
<div class="a" style="left:176px;top:550px;width:1020px;height:10px;background:#ffffff;"></div>
<div class="a" style="left:176px;top:550px;width:872px;height:10px;background:#adacaa;border-radius:5px"></div>
<div class="a" style="left:1186px;top:148px;width:10px;height:367px;background:#adacaa;border-radius:5px"></div>
<div class="a" style="left:176px;top:560px;width:1020px;height:40px;background:#f5fafd;"></div>
<div class="t" style="left:227px;top:574.0px;font-size:12px;line-height:16px;color:#555;">温馨提示：本表供参考，请认真核对数据后再上报！</div>
<div class="t" style="left:1014px;top:574.0px;font-size:12px;line-height:16px;color:#555;">单元格编辑过：示例</div>
<div class="a" style="left:1126px;top:571px;width:52px;height:22px;background:#fdf3df;border:1px solid #e8dfcc"></div>
<div class="a" style="left:1196px;top:148px;width:18px;height:30px;background:#e4e8f3;"></div>
<svg style="left:1197px;top:157px;" width="11" height="11" viewBox="0 0 11 11"><path d="M0.8 0.8 L5 5.3 L0.8 9.8 M5 0.8 L9.2 5.3 L5 9.8" fill="none" stroke="#c4c6ca" stroke-width="1.4"/></svg>
<div class="a" style="left:1214px;top:186px;width:59px;height:413px;background:#fff;box-shadow:-2px 1px 5px rgba(0,0,0,.12)"></div>
<div class="a" style="left:1214px;top:148px;width:59px;height:38px;background:#fff;box-shadow:0 3px 6px rgba(0,0,0,.07)"></div>
<div class="a" style="left:1219px;top:157px;width:50px;height:20px;background:#f4f4f4;border-radius:4px"></div>
<div class="t" style="left:1044.0px;top:158.5px;width:400px;text-align:center;font-size:13px;line-height:17px;color:#333;">2022.11</div>
<div class="a" style="left:1236px;top:201px;width:20px;height:20px;border-radius:50%;background:#d6d6d6"></div>
<svg style="left:1240px;top:205px;" width="12" height="12" viewBox="0 0 12 12"><path d="M0.6 6.3 L6 1 L11.4 6.3 M0.6 10.6 L6 5.3 L11.4 10.6" fill="none" stroke="#fff" stroke-width="1.7"/></svg>
<div class="a" style="left:1236px;top:565px;width:20px;height:20px;border-radius:50%;background:#d6d6d6"></div>
<svg style="left:1240px;top:569px;" width="12" height="12" viewBox="0 0 12 12"><path d="M0.6 1.4 L6 6.7 L11.4 1.4 M0.6 5.7 L6 11 L11.4 5.7" fill="none" stroke="#fff" stroke-width="1.7"/></svg>
<div class="t" style="left:1216.0px;top:231.1px;width:60px;text-align:center;font-size:13px;line-height:17px;color:#c2c2c2;font-weight:bold">5月</div>
<div class="t" style="left:1216.0px;top:259.1px;width:60px;text-align:center;font-size:13px;line-height:17px;color:#c2c2c2;font-weight:bold">6月</div>
<div class="t" style="left:1216.0px;top:287.1px;width:60px;text-align:center;font-size:13px;line-height:17px;color:#c2c2c2;font-weight:bold">7月</div>
<div class="t" style="left:1216.0px;top:315.1px;width:60px;text-align:center;font-size:13px;line-height:17px;color:#c2c2c2;font-weight:bold">8月</div>
<div class="t" style="left:1216.0px;top:343.1px;width:60px;text-align:center;font-size:13px;line-height:17px;color:#c2c2c2;font-weight:bold">9月</div>
<div class="t" style="left:1216.0px;top:371.1px;width:60px;text-align:center;font-size:13px;line-height:17px;color:#c2c2c2;font-weight:bold">10月</div>
<div class="a" style="left:1232px;top:393.6px;width:28px;height:28px;border-radius:50%;background:#40c8de"></div>
<div class="t" style="left:1216.0px;top:399.1px;width:60px;text-align:center;font-size:13px;line-height:17px;color:#fff;font-weight:bold">11月</div>
<div class="t" style="left:1216.0px;top:427.1px;width:60px;text-align:center;font-size:13px;line-height:17px;color:#333;font-weight:bold">12月</div>
<div class="t" style="left:1216.0px;top:455.1px;width:60px;text-align:center;font-size:13px;line-height:17px;color:#333;font-weight:bold">1月</div>
<div class="t" style="left:1216.0px;top:483.1px;width:60px;text-align:center;font-size:13px;line-height:17px;color:#333;font-weight:bold">2月</div>
<div class="t" style="left:1216.0px;top:511.1px;width:60px;text-align:center;font-size:13px;line-height:17px;color:#333;font-weight:bold">3月</div>
<div class="t" style="left:1216.0px;top:539.1px;width:60px;text-align:center;font-size:13px;line-height:17px;color:#333;font-weight:bold">4月</div>
<div class="a" style="left:1204px;top:445px;width:36px;height:12px;background:#8fd400;border-radius:6px"></div>
<div class="t" style="left:1201.5px;top:443.0px;width:40px;text-align:center;font-size:12px;line-height:16px;color:#fff;font-weight:bold">2023</div></body></html>
